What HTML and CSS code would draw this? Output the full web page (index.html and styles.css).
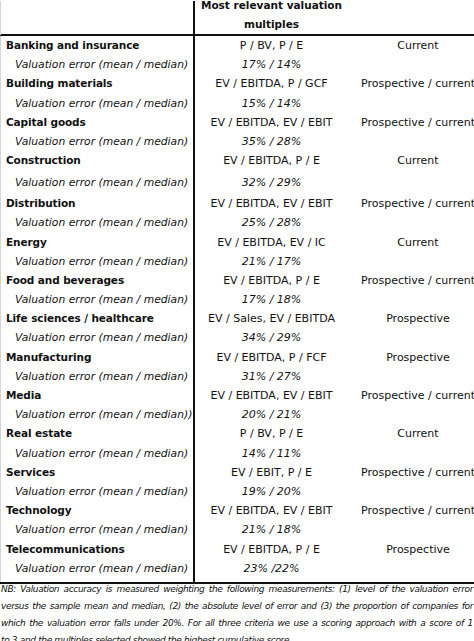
FILE: index.html
```html
<!DOCTYPE html>
<html>
<head>
<meta charset="utf-8">
<link rel="stylesheet" href="styles.css">
</head>
<body>
<div class="page">
  <div class="table">
    <div class="row head">
      <div class="c1"></div>
      <div class="c2"><span>Most relevant valuation</span><span>multiples</span></div>
      <div class="c3"></div>
    </div>

    <div class="row"><div class="c1 sector">Banking and insurance</div><div class="c2">P / BV, P / E</div><div class="c3">Current</div></div>
    <div class="row"><div class="c1 err">Valuation error (mean / median)</div><div class="c2 val">17% / 14%</div><div class="c3"></div></div>

    <div class="row"><div class="c1 sector">Building materials</div><div class="c2">EV / EBITDA, P / GCF</div><div class="c3">Prospective / current</div></div>
    <div class="row"><div class="c1 err">Valuation error (mean / median)</div><div class="c2 val">15% / 14%</div><div class="c3"></div></div>

    <div class="row"><div class="c1 sector">Capital goods</div><div class="c2">EV / EBITDA, EV / EBIT</div><div class="c3">Prospective / current</div></div>
    <div class="row"><div class="c1 err">Valuation error (mean / median)</div><div class="c2 val">35% / 28%</div><div class="c3"></div></div>

    <div class="row tall"><div class="c1 sector">Construction</div><div class="c2">EV / EBITDA, P / E</div><div class="c3">Current</div></div>
    <div class="row tall low"><div class="c1 err">Valuation error (mean / median)</div><div class="c2 val">32% / 29%</div><div class="c3"></div></div>

    <div class="row"><div class="c1 sector">Distribution</div><div class="c2">EV / EBITDA, EV / EBIT</div><div class="c3">Prospective / current</div></div>
    <div class="row"><div class="c1 err">Valuation error (mean / median)</div><div class="c2 val">25% / 28%</div><div class="c3"></div></div>

    <div class="row"><div class="c1 sector">Energy</div><div class="c2">EV / EBITDA, EV / IC</div><div class="c3">Current</div></div>
    <div class="row"><div class="c1 err">Valuation error (mean / median)</div><div class="c2 val">21% / 17%</div><div class="c3"></div></div>

    <div class="row"><div class="c1 sector">Food and beverages</div><div class="c2">EV / EBITDA, P / E</div><div class="c3">Prospective / current</div></div>
    <div class="row"><div class="c1 err">Valuation error (mean / median)</div><div class="c2 val">17% / 18%</div><div class="c3"></div></div>

    <div class="row"><div class="c1 sector">Life sciences / healthcare</div><div class="c2">EV / Sales, EV / EBITDA</div><div class="c3">Prospective</div></div>
    <div class="row"><div class="c1 err">Valuation error (mean / median)</div><div class="c2 val">34% / 29%</div><div class="c3"></div></div>

    <div class="row"><div class="c1 sector">Manufacturing</div><div class="c2">EV / EBITDA, P / FCF</div><div class="c3">Prospective</div></div>
    <div class="row"><div class="c1 err">Valuation error (mean / median)</div><div class="c2 val">31% / 27%</div><div class="c3"></div></div>

    <div class="row"><div class="c1 sector">Media</div><div class="c2">EV / EBITDA, EV / EBIT</div><div class="c3">Prospective / current</div></div>
    <div class="row"><div class="c1 err">Valuation error (mean / median))</div><div class="c2 val">20% / 21%</div><div class="c3"></div></div>

    <div class="row"><div class="c1 sector">Real estate</div><div class="c2">P / BV, P / E</div><div class="c3">Current</div></div>
    <div class="row"><div class="c1 err">Valuation error (mean / median)</div><div class="c2 val">14% / 11%</div><div class="c3"></div></div>

    <div class="row"><div class="c1 sector">Services</div><div class="c2">EV / EBIT, P / E</div><div class="c3">Prospective / current</div></div>
    <div class="row"><div class="c1 err">Valuation error (mean / median)</div><div class="c2 val">19% / 20%</div><div class="c3"></div></div>

    <div class="row"><div class="c1 sector">Technology</div><div class="c2">EV / EBITDA, EV / EBIT</div><div class="c3">Prospective / current</div></div>
    <div class="row"><div class="c1 err">Valuation error (mean / median)</div><div class="c2 val">21% / 18%</div><div class="c3"></div></div>

    <div class="row"><div class="c1 sector">Telecommunications</div><div class="c2">EV / EBITDA, P / E</div><div class="c3">Prospective</div></div>
    <div class="row last"><div class="c1 err">Valuation error (mean / median)</div><div class="c2 val">23% /22%</div><div class="c3"></div></div>
  </div>
  <div class="note">
    <span class="nl">NB: Valuation accuracy is measured weighting the following measurements: (1) level of the valuation error</span>
    <span class="nl">versus the sample mean and median, (2) the absolute level of error and (3) the proportion of companies for</span>
    <span class="nl">which the valuation error falls under 20%. For all three criteria we use a scoring approach with a score of 1</span>
    <span class="nl end">to 3 and the multiples selected showed the highest cumulative score.</span>
  </div>
</div>
</body>
</html>
```

FILE: styles.css
```css
html, body {
  margin: 0;
  padding: 0;
  background: #ffffff;
  overflow: hidden;
}
.page {
  width: 474px;
  height: 641px;
  overflow: hidden;
  font-family: "DejaVu Sans", Verdana, sans-serif;
  color: #111111;
}
.table {
  width: 488px;
  border-bottom: 2px solid #111111;
}
.row {
  display: grid;
  grid-template-columns: 195px 153px 140px;
  height: 19.2px;
  line-height: 19.2px;
  font-size: 11px;
}
.row > div {
  white-space: nowrap;
}
.c1 {
  border-right: 2px solid #111111;
  box-sizing: border-box;
  border-left: 1px solid #d4d4d4;
}
.c2, .c3 {
  text-align: center;
}
.sector {
  font-weight: bold;
  font-size: 10.5px;
  letter-spacing: -0.1px;
  padding-left: 5px;
}
.err {
  font-style: italic;
  font-size: 10.75px;
  padding-left: 14px;
}
.val {
  font-style: italic;
}
.row.head {
  height: 34px;
  border-bottom: 2px solid #111111;
  align-items: end;
}
.head .c2 {
  display: flex;
  flex-direction: column;
  align-items: center;
  font-weight: bold;
  font-size: 10.5px;
  padding-bottom: 1px;
}
.head .c1, .head .c2, .head .c3 {
  height: 34px;
  overflow: hidden;
  justify-content: flex-end;
}
.row.tall {
  height: 21.5px;
}
.row.low > div {
  padding-top: 0.5px;
}
.row.last {
  height: 23.5px;
}
.note {
  margin-top: -3px;
  font-size: 9px;
  font-style: italic;
  letter-spacing: -0.35px;
  line-height: 17px;
  padding: 0 1px 0 1px;
}
.nl {
  display: block;
  white-space: nowrap;
  text-align: justify;
  text-align-last: justify;
}
.nl.end {
  text-align-last: left;
}
```
